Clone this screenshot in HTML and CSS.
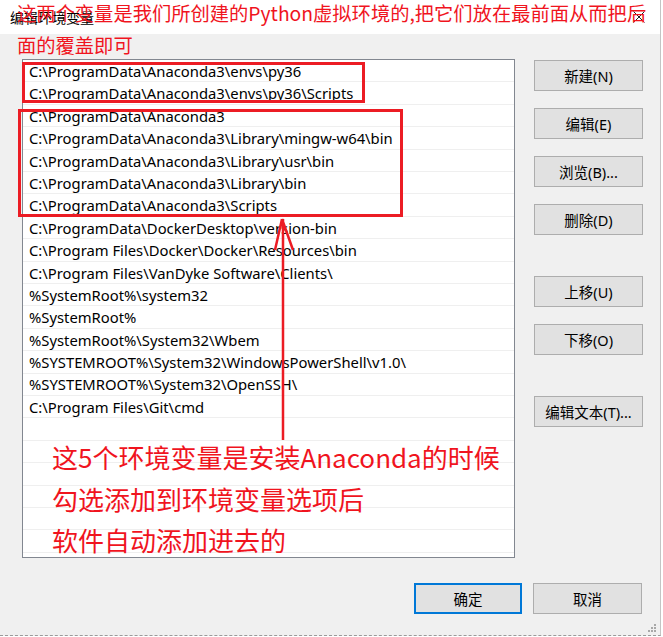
FILE: index.html
```html
<!DOCTYPE html>
<html lang="zh-CN">
<head>
  <meta charset="UTF-8">
  <title>编辑环境变量</title>
  <meta name="viewport" content="width=device-width, initial-scale=1.0">
  <link rel="stylesheet" href="styles.css">
</head>
<body>

  <div class="window">
    <div class="titlebar">
      <span class="title">编辑环境变量</span>
      <svg class="close" viewBox="0 0 12 12">
        <path d="M0.5 0.5L11.5 11.5M11.5 0.5L0.5 11.5"/>
      </svg>
    </div>

    <div class="main">
      <div class="list">
        <div class="row">C:\ProgramData\Anaconda3\envs\py36</div>
        <div class="row">C:\ProgramData\Anaconda3\envs\py36\Scripts</div>
        <div class="row">C:\ProgramData\Anaconda3</div>
        <div class="row">C:\ProgramData\Anaconda3\Library\mingw-w64\bin</div>
        <div class="row">C:\ProgramData\Anaconda3\Library\usr\bin</div>
        <div class="row">C:\ProgramData\Anaconda3\Library\bin</div>
        <div class="row">C:\ProgramData\Anaconda3\Scripts</div>
        <div class="row">C:\ProgramData\DockerDesktop\version-bin</div>
        <div class="row">C:\Program Files\Docker\Docker\Resources\bin</div>
        <div class="row">C:\Program Files\VanDyke Software\Clients\</div>
        <div class="row">%SystemRoot%\system32</div>
        <div class="row">%SystemRoot%</div>
        <div class="row">%SystemRoot%\System32\Wbem</div>
        <div class="row">%SYSTEMROOT%\System32\WindowsPowerShell\v1.0\</div>
        <div class="row">%SYSTEMROOT%\System32\OpenSSH\</div>
        <div class="row">C:\Program Files\Git\cmd</div>
      </div>

      <div class="side">
        <button class="btn">新建(N)</button>
        <button class="btn">编辑(E)</button>
        <button class="btn">浏览(B)...</button>
        <button class="btn">删除(D)</button>
        <button class="btn group">上移(U)</button>
        <button class="btn">下移(O)</button>
        <button class="btn group">编辑文本(T)...</button>
      </div>
    </div>

    <div class="footer">
      <button class="btn default">确定</button>
      <button class="btn">取消</button>
    </div>

    <!-- 标注 -->
    <div class="note-top">这两个变量是我们所创建的Python虚拟环境的,把它们放在最前面从而把后<br>面的覆盖即可</div>
    <div class="mark mark-envs"></div>
    <div class="mark mark-conda"></div>
    <svg class="arrow" viewBox="0 0 32 230">
      <path d="M14 5L7 36M14 5L25 36M15 5L15 226"/>
    </svg>
    <div class="note-bottom">这5个环境变量是安装Anaconda的时候<br>勾选添加到环境变量选项后<br>软件自动添加进去的</div>

    <svg class="grip" viewBox="0 0 9 9">
      <rect x="7" y="1" width="2" height="2"/>
      <rect x="4" y="4" width="2" height="2"/>
      <rect x="7" y="4" width="2" height="2"/>
      <rect x="1" y="7" width="2" height="2"/>
      <rect x="4" y="7" width="2" height="2"/>
      <rect x="7" y="7" width="2" height="2"/>
    </svg>
  </div>

</body>
</html>
```

FILE: styles.css
```css
* { margin: 0; padding: 0; box-sizing: border-box; }
body {
  background: #fff;
  font-family: "Noto Sans", "Noto Sans CJK SC", sans-serif;
}

/* JENDELA */
.window {
  width: 661px;
  height: 636px;
  background: #f0f0f0;
  border-right: 1px solid #c4c4c4;
  border-bottom: 1px dashed #9a9a9a;
  position: relative;
  display: flex;
  flex-direction: column;
}

.titlebar {
  height: 34px;
  background: #fff;
  display: flex;
  align-items: center;
  justify-content: space-between;
  padding: 0 15px 0 10px;
}
.title { font-family: "Noto Sans CJK SC", sans-serif; font-size: 14px; color: #000; }
.close { width: 12px; height: 12px; stroke: #222; stroke-width: 1; fill: none; }

.main { display: flex; gap: 19px; padding: 25px 0 0 22px; }

.list {
  width: 493px;
  height: 499px;
  border: 1px solid #828790;
  background: repeating-linear-gradient(to bottom, #fff 0, #fff 21.4px, #efefef 21.4px, #efefef 22.4px);
}
.row {
  height: 22.4px;
  line-height: 22.4px;
  padding-left: 6px;
  font-size: 14.8px;
  color: #000;
  white-space: nowrap;
}

.side { display: flex; flex-direction: column; gap: 17px; padding-top: 1px; }
.btn {
  width: 109px;
  height: 31px;
  border: 1px solid #adadad;
  background: #e1e1e1;
  color: #000;
  font-family: "Noto Sans", "Noto Sans CJK SC", sans-serif;
  font-size: 14.5px;
  cursor: pointer;
}
.side .group { margin-top: 24px; }

.footer { display: flex; justify-content: flex-end; gap: 11px; padding: 24.5px 18px 0 0; }
.btn.default { width: 108px; border: 2px solid #0078d7; }

/* ANOTASI MERAH */
.note-top {
  position: absolute;
  left: 17px;
  top: -2px;
  font-family: "Noto Sans CJK SC", sans-serif;
  font-size: 19.3px;
  line-height: 31.5px;
  color: #f0141e;
  white-space: nowrap;
}
.note-bottom {
  position: absolute;
  left: 52px;
  top: 436px;
  font-family: "Noto Sans CJK SC", sans-serif;
  font-size: 26px;
  line-height: 41.5px;
  color: #f0141e;
  white-space: nowrap;
}
.mark { position: absolute; border: 3px solid #ec1c24; }
.mark-envs { left: 22px; top: 62px; width: 343px; height: 41px; }
.mark-conda { left: 18px; top: 109px; width: 385px; height: 108px; }
.arrow {
  position: absolute;
  left: 268px;
  top: 214px;
  width: 32px;
  height: 230px;
  stroke: #ec1c24;
  stroke-width: 2.5;
  fill: none;
}
.grip { position: absolute; right: 4px; bottom: 3px; width: 9px; height: 9px; fill: #a8a8a8; }
```
